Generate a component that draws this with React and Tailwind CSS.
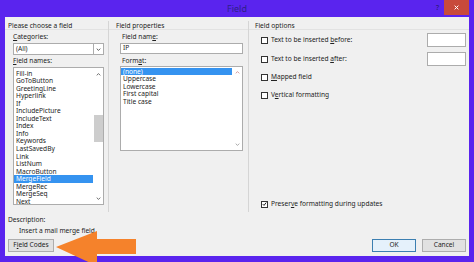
import React from "react";

const fieldNames = [
  "Fill-in",
  "GoToButton",
  "GreetingLine",
  "Hyperlink",
  "If",
  "IncludePicture",
  "IncludeText",
  "Index",
  "Info",
  "Keywords",
  "LastSavedBy",
  "Link",
  "ListNum",
  "MacroButton",
  "MergeField",
  "MergeRec",
  "MergeSeq",
  "Next",
];

const formats = ["(none)", "Uppercase", "Lowercase", "First capital", "Title case"];

function Chevron({ up, className = "" }) {
  return (
    <svg viewBox="0 0 8 5" className={`w-[5px] h-[3px] ${className}`}>
      <path
        d={up ? "M1 4 L4 1 L7 4" : "M1 1 L4 4 L7 1"}
        fill="none"
        stroke="currentColor"
        strokeWidth="1.4"
      />
    </svg>
  );
}

function Check({ checked, children }) {
  return (
    <div className="flex items-center h-[8px]">
      <div className="w-[7px] h-[7px] border border-[#333] bg-white flex items-center justify-center">
        {checked && (
          <svg viewBox="0 0 8 8" className="w-[6px] h-[6px]">
            <path d="M1.2 4.2 L3.2 6.2 L6.8 1.6" fill="none" stroke="#111" strokeWidth="1.5" />
          </svg>
        )}
      </div>
      <span className="ml-[3px]">{children}</span>
    </div>
  );
}

export default function App() {
  return (
    <div className="relative w-[474px] h-[262px] overflow-hidden bg-[#5a24ee] font-['Noto_Sans',sans-serif] text-[6.6px] text-[#222] leading-none">
      {/* title bar */}
      <div className="relative h-[17px] flex items-center justify-center">
        <span className="text-[9px] text-[#2f2088] mt-[-1px]">Field</span>
        <span className="absolute left-[436px] top-[4px] text-[7px] text-[#241a66]">?</span>
        <div className="absolute left-[444px] top-0 w-[25px] h-[15px] bg-[#c84a3b] flex items-center justify-center">
          <svg viewBox="0 0 8 8" className="w-[5px] h-[5px]">
            <path d="M1 1 L7 7 M7 1 L1 7" stroke="white" strokeWidth="1.6" />
          </svg>
        </div>
      </div>

      {/* dialog body */}
      <div className="mx-[5px] h-[239px] bg-[#f0f0f0] flex flex-col">
        <div className="flex h-[195px]">
          {/* left column */}
          <div className="w-[104px] border-r border-[#d5d5d5] mt-[4px] flex flex-col">
            <div className="h-[9px] leading-[9px] pl-[3px] border-b border-[#e2e2e2]">Please choose a field</div>
            <div className="pl-[8px] mt-[2px] h-[9px] leading-[9px]">
              <span className="underline">C</span>ategories:
            </div>
            <div className="ml-[8px] mt-[2px] w-[91px] h-[12px] border border-[#acacac] bg-white flex items-center">
              <span className="pl-[2px] flex-1">(All)</span>
              <div className="w-[10px] h-[10px] border-l border-[#acacac] flex items-center justify-center text-[#444]">
                <Chevron />
              </div>
            </div>
            <div className="pl-[8px] mt-[1px] h-[10px] leading-[10px]">
              <span className="underline">F</span>ield names:
            </div>
            <div className="ml-[8px] mt-[1px] w-[91px] h-[138px] border border-[#acacac] bg-white flex">
              <div className="flex-1 pt-[1.5px]">
                {fieldNames.map((n) => (
                  <div
                    key={n}
                    className={`h-[7.55px] leading-[7.55px] pl-[2px] ${
                      n === "MergeField" ? "bg-[#3593f0] text-white" : ""
                    }`}
                  >
                    {n}
                  </div>
                ))}
              </div>
              <div className="w-[10px] flex flex-col items-center text-[#555]">
                <Chevron up className="mt-[5px]" />
                <div className="mt-[39px] w-[9px] h-[27px] bg-[#cdcdcd]" />
                <div className="flex-1" />
                <Chevron className="mb-[4px]" />
              </div>
            </div>
          </div>

          {/* middle column */}
          <div className="w-[140px] border-r border-[#d5d5d5] mt-[4px] flex flex-col">
            <div className="h-[9px] leading-[9px] pl-[7px] border-b border-[#e2e2e2]">Field properties</div>
            <div className="pl-[13px] mt-[2px] h-[9px] leading-[9px]">
              Field nam<span className="underline">e</span>:
            </div>
            <div className="ml-[11px] mt-[2px] w-[123px] h-[11px] border border-[#acacac] bg-white flex items-center pl-[2px]">
              IP
            </div>
            <div className="pl-[13px] mt-[2px] h-[10px] leading-[10px]">
              Form<span className="underline">a</span>t:
            </div>
            <div className="ml-[11px] w-[123px] h-[85px] border border-[#acacac] bg-white flex">
              <div className="flex-1 pt-[0.5px]">
                {formats.map((f, i) => (
                  <div
                    key={f}
                    className={`h-[7.5px] leading-[7.5px] pl-[2px] ${i === 0 ? "bg-[#3593f0] text-white" : ""}`}
                  >
                    {f}
                  </div>
                ))}
              </div>
              <div className="w-[10px] flex flex-col items-center text-[#d08a8a]">
                <Chevron up className="mt-[4px]" />
                <div className="flex-1" />
                <Chevron className="mb-[4px] text-[#999]" />
              </div>
            </div>
          </div>

          {/* right column */}
          <div className="flex-1 mt-[4px] flex flex-col">
            <div className="h-[9px] leading-[9px] pl-[6px] border-b border-[#e2e2e2]">Field options</div>
            <div className="pl-[12px] pr-[3px] flex flex-col flex-1">
              <div className="flex items-center justify-between mt-[3px] h-[14px]">
                <Check>
                  Text to be inserted <span className="underline">b</span>efore:
                </Check>
                <div className="w-[39px] h-[14px] border border-[#acacac] bg-white" />
              </div>
              <div className="flex items-center justify-between mt-[5px] h-[14px]">
                <Check>
                  Text to be inserted <span className="underline">a</span>fter:
                </Check>
                <div className="w-[39px] h-[14px] border border-[#acacac] bg-white" />
              </div>
              <div className="mt-[7px]">
                <Check>
                  <span className="underline">M</span>apped field
                </Check>
              </div>
              <div className="mt-[10px]">
                <Check>
                  V<span className="underline">e</span>rtical formatting
                </Check>
              </div>
              <div className="mt-auto mb-[4px]">
                <Check checked>
                  Preser<span className="underline">v</span>e formatting during updates
                </Check>
              </div>
            </div>
          </div>
        </div>

        {/* description */}
        <div className="pl-[3px] mt-[3px] h-[9px] leading-[9px]">Description:</div>
        <div className="pl-[14px] mt-[2px] h-[9px] leading-[9px]">Insert a mail merge field</div>

        {/* buttons */}
        <div className="flex items-center mt-auto mb-[4px] px-[3px]">
          <div className="w-[46px] h-[13px] border border-[#adadad] bg-[#e1e1e1] flex items-center justify-center">
            F<span className="underline">i</span>eld Codes
          </div>
          <div className="flex-1" />
          <div className="w-[44px] h-[13px] border border-[#3c7fb1] bg-[#e5f1fb] flex items-center justify-center">
            OK
          </div>
          <div className="ml-[6px] w-[44px] h-[13px] border border-[#adadad] bg-[#e1e1e1] flex items-center justify-center">
            Cancel
          </div>
        </div>
      </div>

      {/* annotation arrow */}
      <svg className="absolute left-0 top-0 pointer-events-none" width="474" height="262" viewBox="0 0 474 262">
        <polygon points="56,247 97,231 97,239 136,239 136,254 97,254 97,266" fill="#f5822b" />
      </svg>
    </div>
  );
}
